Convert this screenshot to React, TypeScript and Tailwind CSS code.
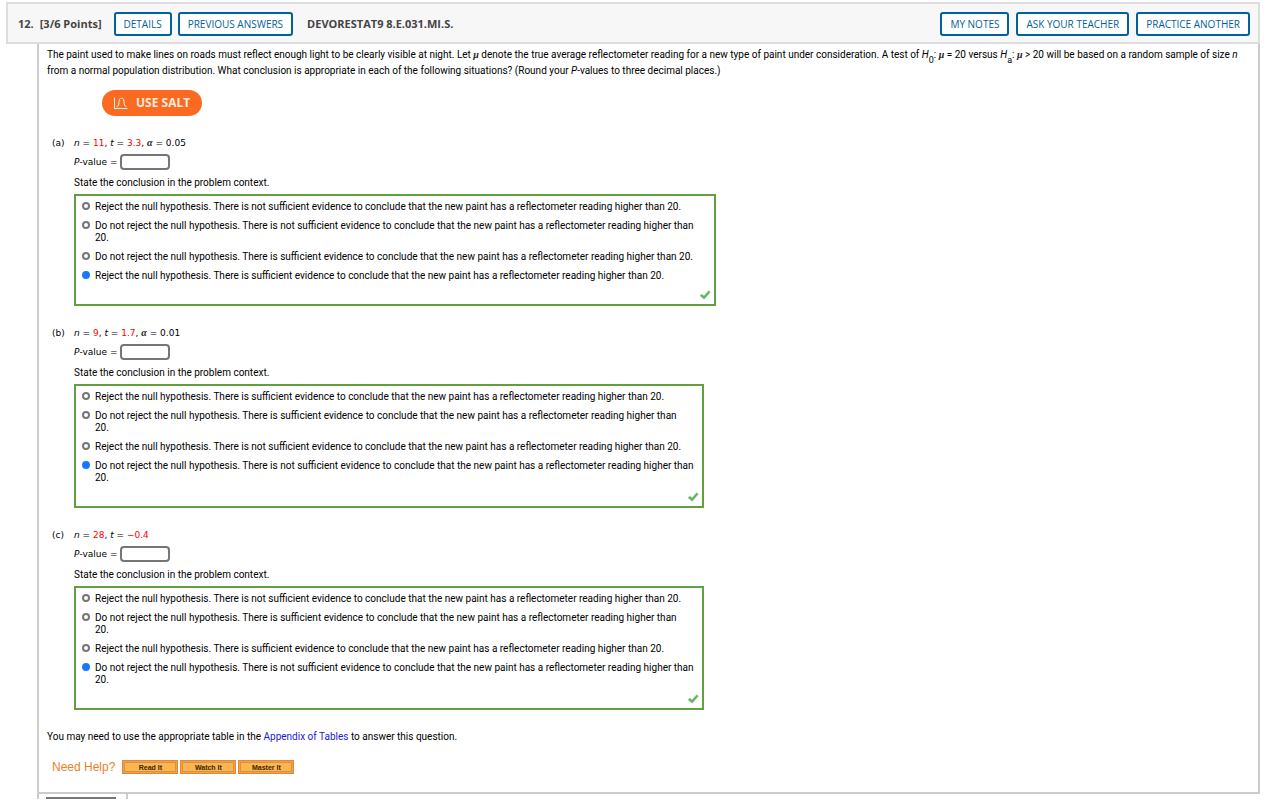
import { useState } from 'react';
import type { ReactNode } from 'react';

const REJECT_NOT = 'Reject the null hypothesis. There is not sufficient evidence to conclude that the new paint has a reflectometer reading higher than 20.';
const REJECT = 'Reject the null hypothesis. There is sufficient evidence to conclude that the new paint has a reflectometer reading higher than 20.';
const KEEP = 'Do not reject the null hypothesis. There is sufficient evidence to conclude that the new paint has a reflectometer reading higher than 20.';
const KEEP_WRAPPED = 'Do not reject the null hypothesis. There is sufficient evidence to conclude that the new paint has a reflectometer reading higher than\n20.';
const KEEP_NOT = 'Do not reject the null hypothesis. There is not sufficient evidence to conclude that the new paint has a reflectometer reading higher than\n20.';

function Greek({ children }: { children: ReactNode }) {
  return <i className="font-['Liberation_Serif',serif] font-bold text-[10px] leading-none text-[#222]">{children}</i>;
}

function Red({ children }: { children: ReactNode }) {
  return <span className="text-[#ff0000]">{children}</span>;
}

function Sub({ children }: { children: ReactNode }) {
  return <sub className="-bottom-[5px] text-[9px]">{children}</sub>;
}

function HeaderButton({ children }: { children: ReactNode }) {
  return (
    <button
      type="button"
      className="h-6 rounded-[3px] border-2 border-[#006298] bg-white px-2 text-[10px] font-medium leading-5 text-[#006298] whitespace-nowrap"
    >
      {children}
    </button>
  );
}

function HelpButton({ children }: { children: ReactNode }) {
  return (
    <button
      type="button"
      className="flex h-[14px] w-14 border border-[#e0883c] bg-[#f0a044] p-px font-['Liberation_Sans',sans-serif] text-[7px] font-bold text-[#3a2508]"
    >
      <span className="h-[10px] flex-1 border border-[#dc9040] bg-[#fbb650] text-center leading-[9px]">{children}</span>
    </button>
  );
}

function SaltIcon() {
  return (
    <svg viewBox="0 0 14 13" className="h-[13px] w-[14px]" fill="none" stroke="#fff0e6" strokeWidth="1">
      <path d="M0.5 0.5V11.5H13.5" />
      <path d="M2.5 9.5C4.9 9.5 4.8 7.5 5.1 4.500C5.3 2 6.100 1.200 7.5 1.200C9.100 1.200 9.7 2 10 4.500C10.3 7.5 10.2 9.5 12.5 9.5" />
    </svg>
  );
}

function CheckMark() {
  return (
    <svg viewBox="0 0 12 10" className="h-[10px] w-3">
      <path d="M1 5.8L3 4.2L5 6L9.6 0.8L11.4 2L5.2 9.3Z" fill="#62b360" stroke="#8cc98a" strokeWidth="0.6" />
    </svg>
  );
}

interface PartProps {
  id: string;
  given: ReactNode;
  options: string[];
  answer: number;
  boxWidth: string;
}

function Part({ id, given, options, answer, boxWidth }: PartProps) {
  const [selected, setSelected] = useState(answer);

  return (
    <section className="flex">
      <div className="w-[22px] shrink-0 font-['DejaVu_Sans',sans-serif] text-[9px]">({id})</div>
      <div className="min-w-0 flex-1">
        <p className="font-['DejaVu_Sans',sans-serif] text-[9px]">{given}</p>
        <div className="mt-[5px] flex h-4 items-center">
          <label htmlFor={`p-${id}`} className="w-[46px] font-['DejaVu_Sans',sans-serif] text-[9px] whitespace-nowrap">
            <i>P</i>-value =
          </label>
          <input
            id={`p-${id}`}
            type="text"
            className="h-4 w-[50px] rounded-[4px] border-2 border-[#767676] bg-white px-1 text-[10px]"
          />
        </div>
        <p className="mt-[7px]">State the conclusion in the problem context.</p>
        <fieldset className={`mt-[5px] max-w-full border-2 border-[#61a03d] pt-[5px] pr-[3px] pb-1 pl-[6px] ${boxWidth}`}>
          <div className="flex flex-col gap-[7px]">
            {options.map((option, i) => (
              <label key={i} className="flex items-start gap-[5px]">
                <input
                  type="radio"
                  name={`conclusion-${id}`}
                  checked={selected === i}
                  onChange={() => setSelected(i)}
                  className="mt-px size-2 shrink-0 appearance-none rounded-full border-2 border-[#767676] bg-white checked:border-[#147bff] checked:bg-[#147bff]"
                />
                <span className="whitespace-pre">{option}</span>
              </label>
            ))}
          </div>
          <div className="mt-2 flex justify-end">
            <CheckMark />
          </div>
        </fieldset>
      </div>
    </section>
  );
}

export default function App() {
  return (
    <div className="bg-white pt-[2px] pr-[10px] pl-[6px] font-[Roboto,Verdana,sans-serif] text-[10px] leading-3 text-black">
      <header className="flex items-center border-2 border-[#ddd] bg-[#f7f7f7] pt-2 pr-2 pb-[6px] pl-[10px] font-['Open_Sans',sans-serif]">
        <h1 className="flex gap-[6px] text-[11px] font-bold leading-5 text-[#444] whitespace-nowrap">
          <span>12.</span>
          <span>[3/6 Points]</span>
        </h1>
        <div className="ml-3 flex gap-[6px]">
          <HeaderButton>DETAILS</HeaderButton>
          <HeaderButton>PREVIOUS ANSWERS</HeaderButton>
        </div>
        <span className="ml-[14px] text-[11px] font-bold text-[#444]">DEVORESTAT9 8.E.031.MI.S.</span>
        <div className="ml-auto flex gap-[7px]">
          <HeaderButton>MY NOTES</HeaderButton>
          <HeaderButton>ASK YOUR TEACHER</HeaderButton>
          <HeaderButton>PRACTICE ANOTHER</HeaderButton>
        </div>
      </header>

      <main className="ml-[31px] border-x-2 border-b-2 border-[#ccc] px-2 pt-[3px] pb-[18px]">
        <p className="leading-4">
          The paint used to make lines on roads must reflect enough light to be clearly visible at night. Let <Greek>μ</Greek> denote
          the true average reflectometer reading for a new type of paint under consideration. A test of <i>H</i>
          <Sub>0</Sub>: <Greek>μ</Greek> = 20 versus <i>H</i>
          <Sub>a</Sub>: <Greek>μ</Greek> &gt; 20 will be based on a random sample of size <i>n</i> from a normal population
          distribution. What conclusion is appropriate in each of the following situations? (Round your <i>P</i>-values to three
          decimal places.)
        </p>

        <button
          type="button"
          className="mt-[11px] ml-[55px] flex h-[26px] items-center gap-2 rounded-full bg-[#fa6a20] px-3 font-['Open_Sans',sans-serif] text-[12px] font-bold text-[#ffeadf]"
        >
          <SaltIcon />
          USE SALT
        </button>

        <div className="mt-[21px] ml-[5px] flex flex-col gap-[21px]">
          <Part
            id="a"
            given={<><i>n</i> = <Red>11</Red>, <i>t</i> = <Red>3.3</Red>, <Greek>α</Greek> = 0.05</>}
            options={[REJECT_NOT, KEEP_NOT, KEEP, REJECT]}
            answer={3}
            boxWidth="w-[642px]"
          />
          <Part
            id="b"
            given={<><i>n</i> = <Red>9</Red>, <i>t</i> = <Red>1.7</Red>, <Greek>α</Greek> = 0.01</>}
            options={[REJECT, KEEP_WRAPPED, REJECT_NOT, KEEP_NOT]}
            answer={3}
            boxWidth="w-[630px]"
          />
          <Part
            id="c"
            given={<><i>n</i> = <Red>28</Red>, <i>t</i> = <Red>−0.4</Red></>}
            options={[REJECT_NOT, KEEP_WRAPPED, REJECT, KEEP_NOT]}
            answer={3}
            boxWidth="w-[630px]"
          />
        </div>

        <p className="mt-[21px]">
          You may need to use the appropriate table in the <a href="#tables" className="text-[#1a1acc]">Appendix of Tables</a> to
          answer this question.
        </p>

        <div className="mt-[17px] ml-[5px] flex h-[14px] items-center gap-[2px]">
          <span className="mr-[5px] font-['Liberation_Sans',sans-serif] text-[12px] text-[#ea7f28]">Need Help?</span>
          <HelpButton>Read It</HelpButton>
          <HelpButton>Watch It</HelpButton>
          <HelpButton>Master It</HelpButton>
        </div>
      </main>

      <div className="ml-[31px] flex h-[5px] w-[91px] border-x-2 border-[#ccc] px-[7px] pt-[3px]">
        <div className="h-[2px] w-[70px] bg-[#767676]" />
      </div>
    </div>
  );
}
